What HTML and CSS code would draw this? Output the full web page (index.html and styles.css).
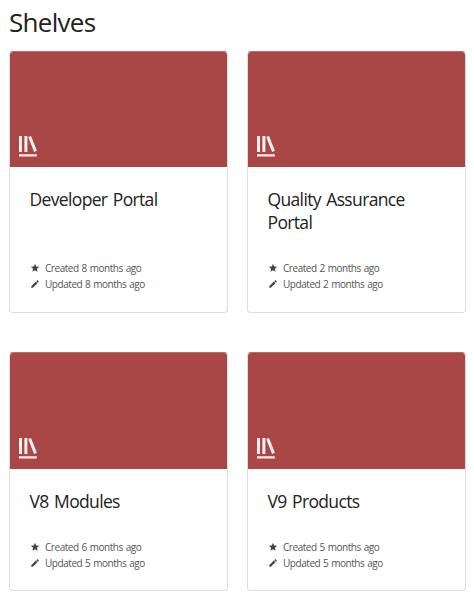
FILE: index.html
```
<!DOCTYPE html>
<html lang="en">
<head>
    <meta charset="UTF-8">
    <title>Shelves</title>
    <meta name="viewport" content="width=device-width, initial-scale=1.0">
    <link rel="stylesheet" href="styles.css">
</head>
<body>

    <svg class="symbols" width="0" height="0">
        <symbol id="shelf" viewBox="0 0 18 21">
            <path d="M0 0h3v16H0zM5.4 0h3v16h-3zM9.2 1.1l2.8-1.1 5.9 14.8-2.8 1.2zM0 18.3h17.8v2.2H0z"/>
        </symbol>
        <symbol id="star" viewBox="0 0 24 24">
            <path d="M12 17.27 18.18 21l-1.64-7.03L22 9.24l-7.19-.61L12 2 9.19 8.63 2 9.24l5.46 4.73L5.82 21z"/>
        </symbol>
        <symbol id="edit" viewBox="0 0 24 24">
            <path d="M3 17.25V21h3.75L17.81 9.94l-3.75-3.75L3 17.25zM20.71 7.04a1 1 0 0 0 0-1.41l-2.34-2.34a1 1 0 0 0-1.41 0l-1.83 1.83 3.75 3.75 1.83-1.83z"/>
        </symbol>
    </svg>

    <h1>Shelves</h1>

    <main class="grid">
        <a class="card">
            <div class="cover"><svg class="shelf-icon"><use href="#shelf"/></svg></div>
            <h2>Developer Portal</h2>
            <div class="meta">
                <p><svg class="icon"><use href="#star"/></svg><span>Created 8 months ago</span></p>
                <p><svg class="icon"><use href="#edit"/></svg><span>Updated 8 months ago</span></p>
            </div>
        </a>
        <a class="card">
            <div class="cover"><svg class="shelf-icon"><use href="#shelf"/></svg></div>
            <h2>Quality Assurance Portal</h2>
            <div class="meta">
                <p><svg class="icon"><use href="#star"/></svg><span>Created 2 months ago</span></p>
                <p><svg class="icon"><use href="#edit"/></svg><span>Updated 2 months ago</span></p>
            </div>
        </a>
        <a class="card">
            <div class="cover"><svg class="shelf-icon"><use href="#shelf"/></svg></div>
            <h2>V8 Modules</h2>
            <div class="meta">
                <p><svg class="icon"><use href="#star"/></svg><span>Created 6 months ago</span></p>
                <p><svg class="icon"><use href="#edit"/></svg><span>Updated 5 months ago</span></p>
            </div>
        </a>
        <a class="card">
            <div class="cover"><svg class="shelf-icon"><use href="#shelf"/></svg></div>
            <h2>V9 Products</h2>
            <div class="meta">
                <p><svg class="icon"><use href="#star"/></svg><span>Created 5 months ago</span></p>
                <p><svg class="icon"><use href="#edit"/></svg><span>Updated 5 months ago</span></p>
            </div>
        </a>
    </main>

</body>
</html>
```
FILE: styles.css
```
* {
    box-sizing: border-box;
}

body {
    margin: 0;
    padding: 4px 8px 0 9px;
    font-family: "Open Sans", "Noto Sans", sans-serif;
    background-color: #fff;
    color: #222;
    overflow: hidden;
}

.symbols {
    display: block;
}

h1 {
    margin: 0 0 11px;
    font-size: 26px;
    line-height: 36px;
    font-weight: 400;
    letter-spacing: -0.7px;
}

.grid {
    display: grid;
    grid-template-columns: 219px 219px;
    grid-template-rows: 262px 239px;
    column-gap: 19px;
    row-gap: 39px;
}

.card {
    display: flex;
    flex-direction: column;
    border: 1px solid #ddd;
    border-top-color: #b96c6c;
    border-radius: 4px;
    overflow: hidden;
}

.cover {
    display: flex;
    align-items: flex-end;
    height: 115px;
    padding: 0 0 10px 9px;
    background-color: #a94747;
}

.shelf-icon {
    width: 18px;
    height: 21px;
    fill: #fbeeee;
}

h2 {
    margin: 0;
    padding: 21px 19px 0 19.5px;
    font-size: 17.5px;
    line-height: 23px;
    font-weight: 400;
    letter-spacing: -0.65px;
    word-spacing: 1.5px;
}

.meta {
    margin-top: auto;
    padding: 0 20px 20px;
    font-size: 10px;
    line-height: 16px;
    letter-spacing: -0.45px;
    word-spacing: 0.7px;
    color: #555;
}

.meta p {
    display: flex;
    align-items: center;
    margin: 0;
}

.icon {
    width: 10px;
    height: 10px;
    margin-right: 5px;
    fill: #444;
}

/* second row */
.card:nth-child(n+3) .cover {
    height: 116px;
}

.card:nth-child(n+3) .meta {
    padding-bottom: 19px;
}
```
